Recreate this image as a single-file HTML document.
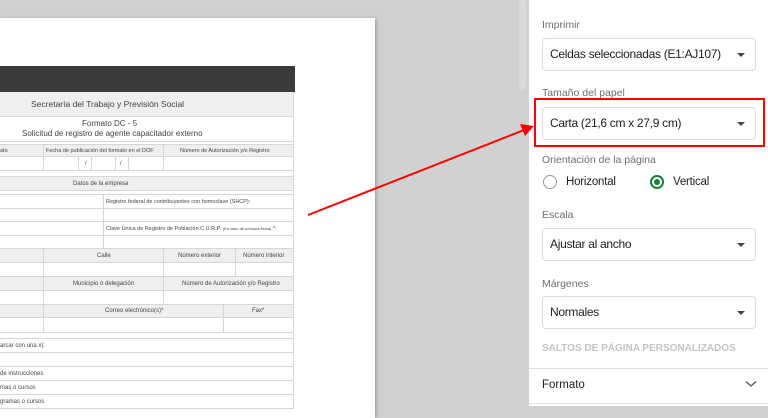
<!DOCTYPE html>
<html><head><meta charset="utf-8"><style>
*{margin:0;padding:0;box-sizing:border-box}
body{width:768px;height:406px;overflow:hidden;background:#d1d1d1;font-family:"Liberation Sans",Arial,sans-serif;position:relative}
.a{position:absolute}
.page{left:0;top:18px;width:375px;height:400px;background:#fff;box-shadow:1px 1px 4px rgba(0,0,0,.3)}
.r{position:absolute;left:0;width:294px;border-bottom:1px solid #d6d6d6;border-right:1px solid #d6d6d6;font-size:6px;color:#444;display:flex;align-items:center}
.g{background:#efefef}
.t{position:absolute;white-space:nowrap}
.v{position:absolute;top:0;bottom:0;width:1px;background:#d6d6d6}
.panel{left:529px;top:0;width:239px;height:406px;background:#fff}
.lbl{position:absolute;left:13px;font-size:10.5px;color:#6f6f6f}
.sel{position:absolute;left:13px;width:214px;height:33px;border:1px solid #dadce0;border-radius:4px;font-size:12px;letter-spacing:-0.3px;color:#202124;padding-left:7px;line-height:31px}
.sel:after{content:"";position:absolute;right:10px;top:14px;border-left:4px solid transparent;border-right:4px solid transparent;border-top:4px solid #444}
</style></head><body>
<div class="a" style="left:519px;top:0;width:7px;height:90px;background:#dadada;border-radius:3px"></div>
<div class="a page"></div>
<div class="a" style="left:0;top:66px;width:295px;height:26px;background:#3a3b3d"></div>
<div class="r g" style="top:92px;height:25px;font-size:8.5px"><span class="t" style="left:31px">Secretaría del Trabajo y Previsión Social</span></div>
<div class="r" style="top:117px;height:25px;font-size:8px"><span class="t" style="left:82px;top:2px">Formato DC - 5</span><span class="t" style="left:22px;top:12px">Solicitud de registro de agente capacitador externo</span></div>
<div class="r" style="top:142px;height:3px"></div>
<div class="r g" style="top:145px;height:12px;font-size:5.5px"><span class="t">ato</span><span class="v" style="left:43px"></span><span class="t" style="left:46px">Fecha de publicación del formato en el DOF</span><span class="v" style="left:163px"></span><span class="t" style="left:180px">Número de Autorización y/o Registro</span></div>
<div class="r" style="top:157px;height:14px"><span class="v" style="left:43px"></span><span class="v" style="left:78px"></span><span class="t" style="left:85px">/</span><span class="v" style="left:91px"></span><span class="v" style="left:115px"></span><span class="t" style="left:120px">/</span><span class="v" style="left:128px"></span><span class="v" style="left:163px"></span></div>
<div class="r" style="top:171px;height:6px"></div>
<div class="r g" style="top:177px;height:14px"><span class="t" style="left:73px">Datos de la empresa</span></div>
<div class="r" style="top:191px;height:4px"></div>
<div class="r" style="top:195px;height:14px;font-size:5.5px"><span class="v" style="left:103px"></span><span class="t" style="left:106px">Registro federal de contribuyentes con homoclave (SHCP):</span></div>
<div class="r" style="top:209px;height:13px"><span class="v" style="left:103px"></span></div>
<div class="r" style="top:222px;height:14px;font-size:5.5px"><span class="v" style="left:103px"></span><span class="t" style="left:106px">Clave Única de Registro de Población C.U.R.P. <span style="font-size:4px">(En caso de persona física)</span> *:</span></div>
<div class="r" style="top:236px;height:13px"><span class="v" style="left:103px"></span></div>
<div class="r g" style="top:249px;height:14px"><span class="v" style="left:43px"></span><span class="t" style="left:97px">Calle</span><span class="v" style="left:163px"></span><span class="t" style="left:178px">Número exterior</span><span class="v" style="left:235px"></span><span class="t" style="left:243px">Número interior</span></div>
<div class="r" style="top:263px;height:14px"><span class="v" style="left:43px"></span><span class="v" style="left:163px"></span><span class="v" style="left:235px"></span></div>
<div class="r g" style="top:277px;height:14px"><span class="v" style="left:43px"></span><span class="t" style="left:73px">Municipio o delegación</span><span class="v" style="left:163px"></span><span class="t" style="left:182px">Número de Autorización y/o Registro</span></div>
<div class="r" style="top:291px;height:14px"><span class="v" style="left:43px"></span><span class="v" style="left:163px"></span></div>
<div class="r g" style="top:305px;height:13px"><span class="v" style="left:43px"></span><span class="t" style="left:105px">Correo electrónico(s)*</span><span class="v" style="left:223px"></span><span class="t" style="left:252px">Fax*</span></div>
<div class="r" style="top:318px;height:15px"><span class="v" style="left:43px"></span><span class="v" style="left:223px"></span></div>
<div class="r" style="top:333px;height:6px"></div>
<div class="r" style="top:339px;height:14px"><span class="t">arcar con una x):</span></div>
<div class="r" style="top:353px;height:14px"></div>
<div class="r" style="top:367px;height:14px"><span class="t">de instrucciones</span></div>
<div class="r" style="top:381px;height:14px"><span class="t">mas o cursos</span></div>
<div class="r" style="top:395px;height:14px"><span class="t">gramas o cursos</span></div>

<div class="a panel">
<div class="lbl" style="top:19px">Imprimir</div>
<div class="sel" style="top:38px">Celdas seleccionadas (E1:AJ107)</div>
<div class="lbl" style="top:87px">Tamaño del papel</div>
<div class="sel" style="top:107px">Carta (21,6 cm x 27,9 cm)</div>
<div class="lbl" style="top:154px">Orientación de la página</div>
<div class="a" style="left:14px;top:175px;width:14px;height:14px;border:1.5px solid #999;border-radius:50%"></div>
<div class="a" style="left:37px;top:176px;font-size:11.5px;letter-spacing:-0.2px;color:#202124">Horizontal</div>
<div class="a" style="left:121px;top:175px;width:14px;height:14px;border:2px solid #188038;border-radius:50%"><div style="margin:2px;width:6px;height:6px;border-radius:50%;background:#188038"></div></div>
<div class="a" style="left:144px;top:176px;font-size:11.5px;letter-spacing:-0.2px;color:#202124">Vertical</div>
<div class="lbl" style="top:209px">Escala</div>
<div class="sel" style="top:228px">Ajustar al ancho</div>
<div class="lbl" style="top:278px">Márgenes</div>
<div class="sel" style="top:296px">Normales</div>
<div class="a" style="left:13px;top:343px;font-size:10px;font-weight:bold;color:#c4c4c4">SALTOS DE PÁGINA PERSONALIZADOS</div>
<div class="a" style="left:0;top:368px;width:239px;height:1px;background:#e0e0e0"></div>
<div class="a" style="left:13px;top:379px;font-size:11.5px;color:#202124">Formato</div>
<svg class="a" style="left:216px;top:380px" width="12" height="8"><path d="M1 1.5 L6 6 L11 1.5" stroke="#555" stroke-width="1.3" fill="none"/></svg>
<div class="a" style="left:0;top:403px;width:239px;height:1px;background:#e0e0e0"></div>
</div>
<div class="a" style="left:534px;top:98px;width:231px;height:49px;border:2px solid #f00"></div>
<svg class="a" style="left:0;top:0" width="768" height="406"><line x1="308" y1="215" x2="524" y2="130" stroke="#f00" stroke-width="2"/><polygon points="534,126 520,124 525,136" fill="#f00"/></svg>
</body></html>
